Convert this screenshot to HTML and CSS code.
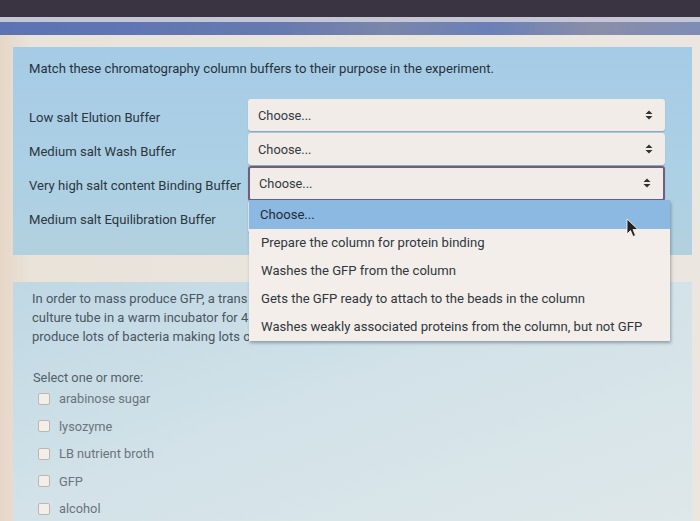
FILE: index.html
```html
<!DOCTYPE html>
<html>
<head>
<meta charset="utf-8">
<link rel="stylesheet" href="styles.css">
</head>
<body>
<div class="topbar"></div>
<div class="strip"></div>
<div class="banner"></div>
<main class="page">
  <section class="card match">
    <p class="qtext">Match these chromatography column buffers to their purpose in the experiment.</p>
    <div class="rows">
      <div class="label">Low salt Elution Buffer</div>
      <div class="select"><span>Choose...</span><svg class="arrows" width="8" height="10" viewBox="0 0 8 10"><path d="M4 0.5 L7.5 4 H0.5 Z M4 9.5 L7.5 6 H0.5 Z" fill="#333"/></svg></div>
      <div class="label">Medium salt Wash Buffer</div>
      <div class="select"><span>Choose...</span><svg class="arrows" width="8" height="10" viewBox="0 0 8 10"><path d="M4 0.5 L7.5 4 H0.5 Z M4 9.5 L7.5 6 H0.5 Z" fill="#333"/></svg></div>
      <div class="label">Very high salt content Binding Buffer</div>
      <div class="select focused"><span>Choose...</span><svg class="arrows" width="8" height="10" viewBox="0 0 8 10"><path d="M4 0.5 L7.5 4 H0.5 Z M4 9.5 L7.5 6 H0.5 Z" fill="#333"/></svg>
        <ul class="menu">
          <li class="hl">Choose...</li>
          <li>Prepare the column for protein binding</li>
          <li>Washes the GFP from the column</li>
          <li>Gets the GFP ready to attach to the beads in the column</li>
          <li>Washes weakly associated proteins from the column, but not GFP</li>
        </ul>
        <svg class="cursor" width="14" height="20" viewBox="0 0 14 20"><path d="M1 1 L1 16 L4.5 12.5 L7 18.5 L9.5 17.5 L7 11.5 L12 11.5 Z" fill="#222" stroke="#fff" stroke-width="0.8"/></svg>
      </div>
      <div class="label">Medium salt Equilibration Buffer</div>
      <div class="select"></div>
    </div>
  </section>
  <section class="card multi">
    <p class="qtext2"><span class="line">In order to mass produce GFP, a trans</span><span class="line">culture tube in a warm incubator for 4</span><span class="line">produce lots of bacteria making lots o</span></p>
    <p class="prompt">Select one or more:</p>
    <ul class="checks">
      <li><span class="box"></span>arabinose sugar</li>
      <li><span class="box"></span>lysozyme</li>
      <li><span class="box"></span>LB nutrient broth</li>
      <li><span class="box"></span>GFP</li>
      <li><span class="box"></span>alcohol</li>
    </ul>
  </section>
</main>
</body>
</html>
```
FILE: styles.css
```css
* { box-sizing: border-box; }
html, body { margin: 0; padding: 0; }
body {
  width: 700px;
  height: 521px;
  overflow: hidden;
  font-family: Roboto, "Liberation Sans", sans-serif;
  background: linear-gradient(90deg, #e6d6c6 0px, #e9e3da 30px, #ebe7e0 100%);
}
.topbar { height: 17px; background: #3a3342; }
.strip { height: 5px; background: #c4c6d6; }
.banner {
  height: 13px;
  background: linear-gradient(90deg, #5b73b4 0%, #6679b0 40%, #7a86aa 55%, #6a80b8 70%, #8a8ea8 85%, #7e8cb6 100%);
}
.page { padding: 12px 8px 0 13px; }
.card { width: 679px; }
.match {
  background: linear-gradient(180deg, #a6cbe6 0%, #acd0e4 60%, #b2d1df 100%);
  padding: 14px 16px 23px 16px;
  height: 208px;
}
.qtext {
  margin: 0;
  font-size: 13.1px;
  line-height: 16px;
  color: #26313b;
}
.rows {
  margin-top: 22px;
  display: grid;
  grid-template-columns: 219px 417px;
  grid-auto-rows: 32px;
  row-gap: 2px;
  align-items: center;
}
.label {
  font-size: 13.1px;
  color: #2c3640;
  padding-top: 4px;
}
.select {
  position: relative;
  height: 32px;
  background: #f1ece8;
  border-radius: 3px;
  box-shadow: 0 1px 1px rgba(70, 90, 110, 0.35);
  display: flex;
  align-items: center;
  justify-content: space-between;
  padding: 0 10px 0 10px;
  font-size: 12.8px;
  color: #333a42;
}
.select.focused {
  border: 2px solid #735c7c;
  height: 35px;
  padding-left: 9px;
}
.arrows { margin-right: 2px; }
.menu {
  position: absolute;
  left: -1px;
  top: 32px;
  width: 421px;
  margin: 0;
  padding: 0;
  list-style: none;
  background: #f3eeea;
  box-shadow: 1px 2px 3px rgba(60, 70, 90, 0.45);
  z-index: 5;
}
.menu li {
  height: 28px;
  line-height: 28px;
  padding-left: 12px;
  font-size: 13.1px;
  color: #2f363d;
}
.menu li.hl {
  background: #8cb9e1;
  height: 29px;
  line-height: 29px;
  padding-left: 11px;
  color: #1f2c3a;
}
.cursor {
  position: absolute;
  left: 376px;
  top: 50px;
  z-index: 6;
}
.multi {
  margin-top: 27px;
  height: 260px;
  background: linear-gradient(160deg, #bfd8e4 0%, #d2e2e8 45%, #dfe8ea 100%);
  padding: 7px 18px 0 19px;
}
.qtext2 {
  margin: 0;
  font-size: 13px;
  line-height: 19px;
  color: #4a5661;
}
.line { display: block; white-space: nowrap; }
.prompt {
  margin: 24px 0 0 1px;
  font-size: 12.8px;
  color: #555f68;
}
.checks {
  list-style: none;
  margin: 0 0 0 6px;
  padding: 0;
}
.checks li {
  display: flex;
  align-items: center;
  height: 27.5px;
  font-size: 12.8px;
  color: #6b747b;
}
.box {
  width: 12px;
  height: 12px;
  border: 1px solid #c2b6aa;
  border-radius: 2px;
  background: #f2eeea;
  margin-right: 9px;
}
```
